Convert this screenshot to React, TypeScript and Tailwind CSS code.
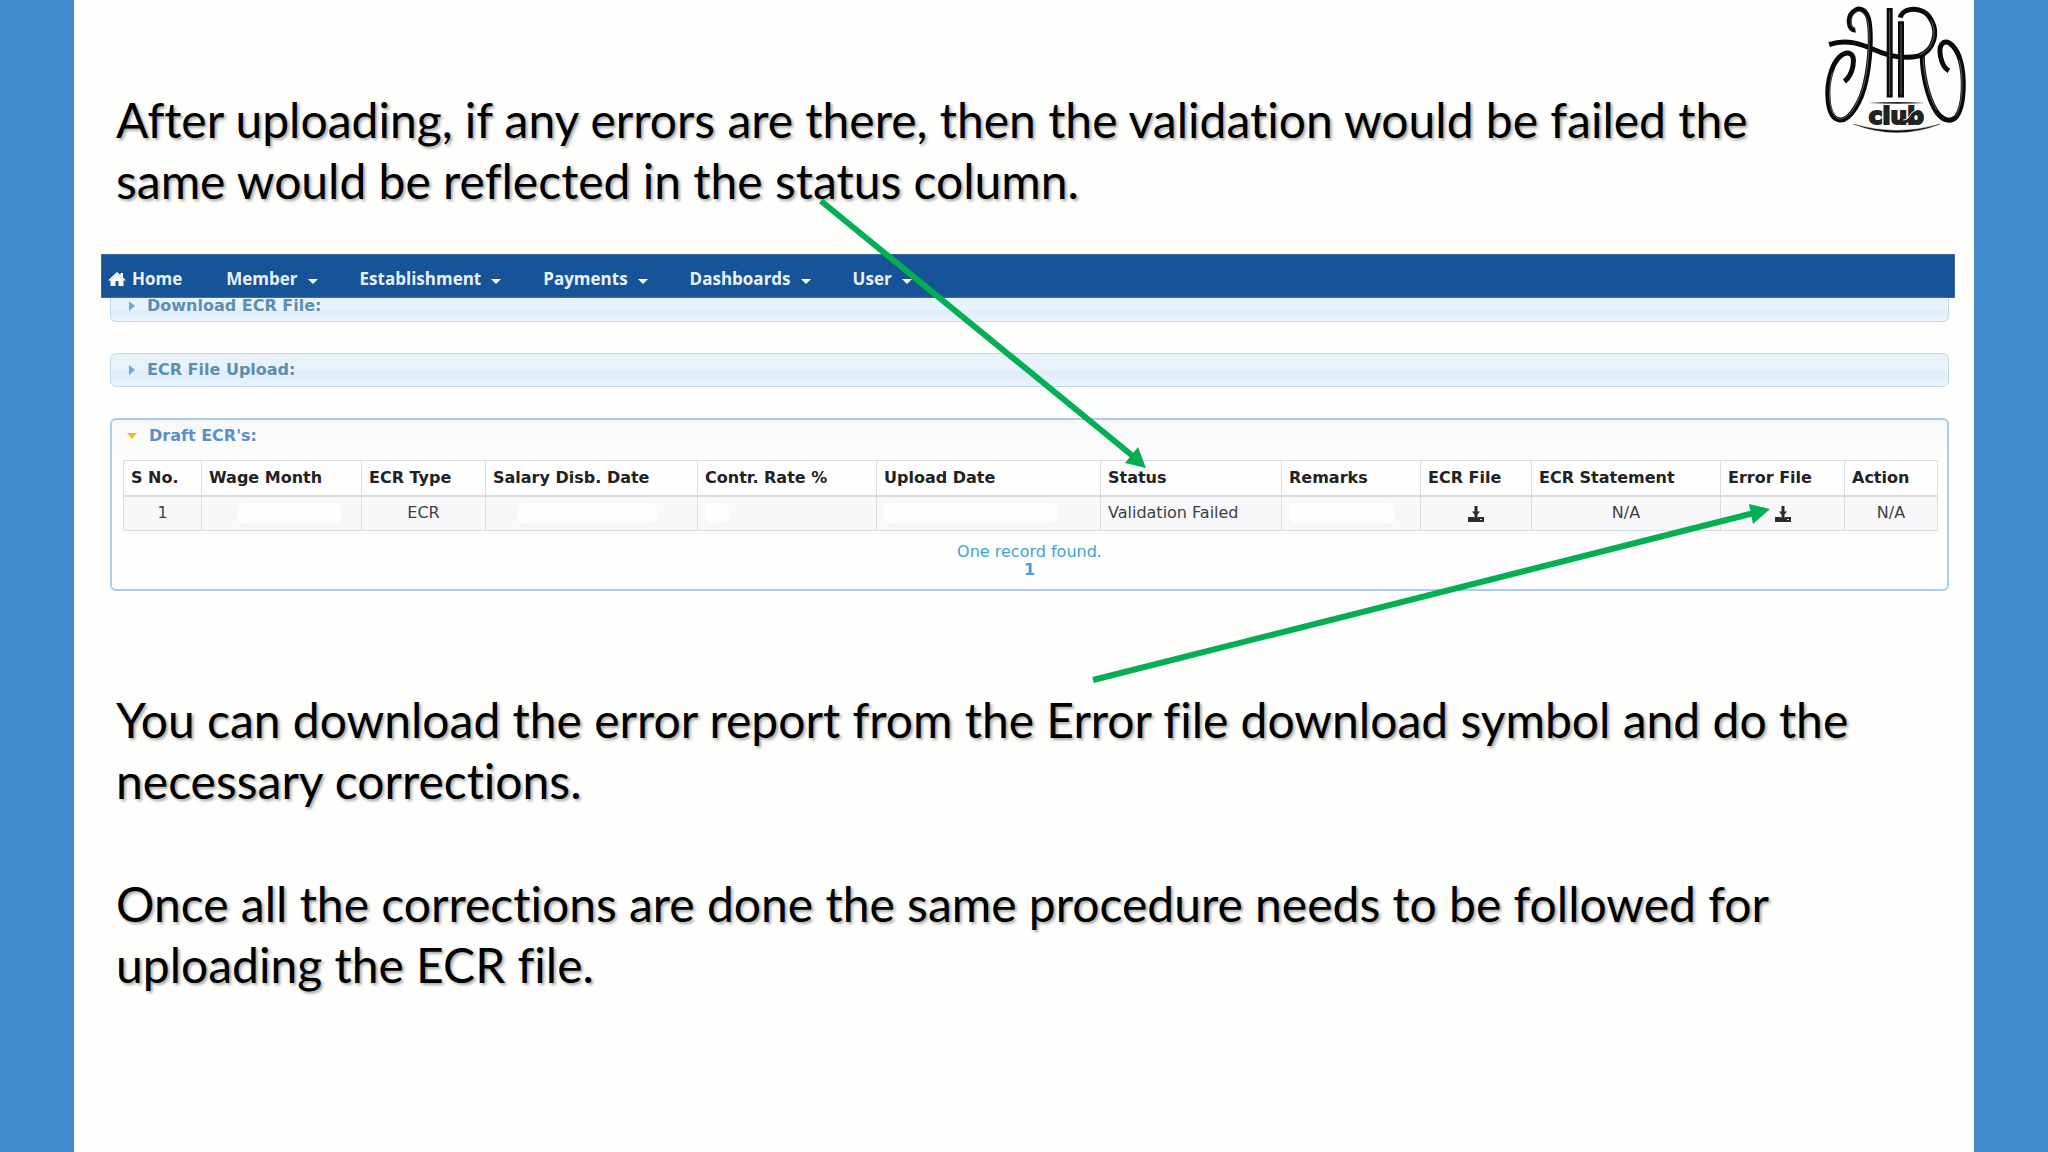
import type { ReactNode } from "react";

const MENU = ["Member", "Establishment", "Payments", "Dashboards", "User"];

interface Column {
  label: string;
  width: string;
  center?: boolean;
  value: ReactNode;
}

function HomeIcon() {
  return (
    <svg viewBox="0 0 18 16" className="h-4 w-[18px]" fill="#fff" aria-hidden="true">
      <path d="M9 1L0 9.500h2.500V15h5v-5h3v5h5V9.500H18L15 6.600V2h-2.500v2.300z" />
      <path d="M3 8.800L9 3.500l6 5.300" fill="none" stroke="#b9cde4" strokeWidth="0.800" />
    </svg>
  );
}

function DownloadIcon() {
  return (
    <svg viewBox="0 0 16 16" className="h-4 w-4" fill="#2b2b2b" aria-hidden="true">
      <path d="M6.500 0h3v5.500H12L8 10.500 4 5.500h2.500z" />
      <path d="M0 11h5.500l2.500 1.500L10.500 11H16v5H0z" />
      <rect x="6.500" y="9" width="3" height="4" />
      <rect x="12" y="13" width="2" height="1" fill="#ddd" />
    </svg>
  );
}

function Download({ label }: { label: string }) {
  return (
    <a href="#" aria-label={label} className="inline-block align-middle">
      <DownloadIcon />
    </a>
  );
}

/** White smudge over a value that is kept private */
function Redacted({ className }: { className: string }) {
  return <span className={`block h-5 rounded-md bg-[#fefefe] ${className}`} />;
}

const COLUMNS: Column[] = [
  { label: "S No.", width: "w-[78px]", center: true, value: "1" },
  { label: "Wage Month", width: "w-[160px]", value: <Redacted className="ml-7 w-[104px]" /> },
  { label: "ECR Type", width: "w-[124px]", center: true, value: "ECR" },
  { label: "Salary Disb. Date", width: "w-[212px]", value: <Redacted className="ml-6 w-[140px]" /> },
  { label: "Contr. Rate %", width: "w-[179px]", value: <Redacted className="w-6" /> },
  { label: "Upload Date", width: "w-[224px]", value: <Redacted className="w-[174px]" /> },
  { label: "Status", width: "w-[181px]", value: "Validation Failed" },
  { label: "Remarks", width: "w-[139px]", value: <Redacted className="w-[106px]" /> },
  { label: "ECR File", width: "w-[111px]", center: true, value: <Download label="Download ECR file" /> },
  { label: "ECR Statement", width: "w-[189px]", center: true, value: "N/A" },
  { label: "Error File", width: "w-[124px]", center: true, value: <Download label="Download error file" /> },
  { label: "Action", width: "w-[93px]", center: true, value: "N/A" },
];

function Logo() {
  return (
    <svg viewBox="56 -2 465 412" className="h-[137px] w-[155px]" fill="none" role="img" aria-label="HR club">
      <g stroke="#0a0a0a" strokeWidth="15" strokeLinecap="butt" strokeLinejoin="round">
        <path d="M165 88C144 92 140 50 158 34C178 14 200 30 206 62C214 110 208 190 196 242C184 300 150 362 118 359C76 354 76 262 92 214C104 174 128 154 146 158C170 166 158 222 132 243" />
        <path d="M86 132C140 114 186 132 218 146C262 166 314 176 356 166C402 150 414 96 394 60C378 24 338 22 318 30C306 36 302 40 300 51" />
        <path d="M268 22V291M302 62V291" strokeWidth="18" />
        <path d="M366 166C366 220 382 290 406 330C424 360 450 368 468 350C494 318 494 226 480 178C470 144 448 118 430 126C410 138 420 196 446 211" />
      </g>
      <g stroke="#8a8a8a" strokeWidth="2">
        <path d="M159 82C148 78 150 50 162 38C180 24 196 38 203 68C210 110 205 190 193 242C180 298 150 354 118 356C82 350 82 262 96 216" />
        <path d="M268 30V284M302 70V284M392 60C412 96 398 148 358 162M369 172C370 220 386 290 409 328M477 178C490 226 489 316 466 346" />
      </g>
      <path d="M203 308Q290 302 375 308Q290 312 203 308Z" fill="#222" />
      <path d="M158 371Q290 422 420 371Q290 410 158 371Z" fill="#111" stroke="#111" strokeWidth="1" />
      <text
        x="288"
        y="370"
        textAnchor="middle"
        fill="#222"
        stroke="#222"
        strokeWidth="6"
        className="font-['DejaVu_Sans'] text-[70px] font-bold"
      >
        club
      </text>
      <path d="M306 366C334 366 330 339 352 337" stroke="#222" strokeWidth="9" />
      <path d="M309 359C330 357 328 332 348 330" stroke="#fff" strokeWidth="3" />
    </svg>
  );
}

function Arrows() {
  return (
    <svg
      viewBox="0 0 1900 1152"
      preserveAspectRatio="none"
      className="pointer-events-none absolute top-0 left-0 h-[1152px] w-full"
      aria-hidden="true"
    >
      <g stroke="#04ae52" strokeWidth="6">
        <path d="M747 201L1060 457" />
        <path d="M1019 680L1680 513" />
      </g>
      <g fill="#04ae52">
        <path d="M1072 468L1051 463L1064 447Z" />
        <path d="M1696 509L1675 504L1679 524Z" />
      </g>
    </svg>
  );
}

function Slab({ title, className }: { title: string; className?: string }) {
  return (
    <button
      type="button"
      className={`flex w-full items-center border border-[#bfdaea] bg-linear-to-b from-[#e9f2fb] from-50% via-[#dfedf9] via-55% to-[#eaf4ff] px-4 text-left text-base font-bold text-[#5a8fb0] ${className}`}
    >
      <span className="mr-3 ml-0.5 border-y-[5px] border-l-[6px] border-y-transparent border-l-[#6ea8cc]" />
      {title}
    </button>
  );
}

function Portal() {
  return (
    <section className="mr-[19px] ml-[27px] font-['DejaVu_Sans',sans-serif]">
      <nav className="flex h-11 items-center border border-[#3f6ea5] bg-[#165397] pt-1.5 pl-1.5 font-['Open_Sans',sans-serif] text-[17px] font-bold text-[#e8f2ff]">
        <a href="#" className="mr-11 flex items-center gap-1.5">
          <HomeIcon />
          Home
        </a>
        {MENU.map((item) => (
          <button key={item} type="button" className="mr-[42px] flex items-center gap-2.5">
            {item}
            <span className="mt-1 border-x-[5px] border-t-[5px] border-x-transparent border-t-white" />
          </button>
        ))}
      </nav>

      <div className="mr-1.5 ml-[9px]">
        <Slab title="Download ECR File:" className="h-6 rounded-b-md border-t-0 pb-2" />
        <Slab title="ECR File Upload:" className="mt-[31px] h-[34px] rounded-md" />

        <div className="mt-[31px] h-[173px] rounded-md border-2 border-[#a9cdea] bg-linear-to-b from-[#f5f7f8] to-[#fdfdfe] to-20% px-[11px]">
          <button type="button" className="flex h-8 items-center text-base font-bold text-[#5b8fcb]">
            <span className="mr-3 ml-1 border-x-[5px] border-t-[6px] border-x-transparent border-t-[#f2b51d]" />
            Draft ECR's:
          </button>

          <table className="mt-2 w-full table-fixed border-collapse text-base text-[#3f3f3f]">
            <thead>
              <tr className="h-[35px]">
                {COLUMNS.map((c) => (
                  <th
                    key={c.label}
                    className={`border border-b-2 border-[#dcdcdc] pl-[7px] text-left font-bold whitespace-nowrap text-[#222] ${c.width}`}
                  >
                    {c.label}
                  </th>
                ))}
              </tr>
            </thead>
            <tbody>
              <tr className="h-[35px] bg-[#f8f8fa]">
                {COLUMNS.map((c) => (
                  <td
                    key={c.label}
                    className={`border border-[#dcdcdc] whitespace-nowrap ${c.center ? "text-center" : "pl-[7px]"}`}
                  >
                    {c.value}
                  </td>
                ))}
              </tr>
            </tbody>
          </table>

          <div className="mt-3 text-center text-base leading-[18px] text-[#3fa3d3]">
            <p>One record found.</p>
            <p className="font-bold">1</p>
          </div>
        </div>
      </div>
    </section>
  );
}

function Note({ children, className }: { children: ReactNode; className: string }) {
  return (
    <p
      className={`ml-[42px] font-['Lato',sans-serif] text-[48px] leading-[61px] whitespace-nowrap text-black [font-variant-ligatures:none] [text-shadow:2px_2px_3px_rgba(0,0,0,0.35)] ${className}`}
    >
      {children}
    </p>
  );
}

export default function App() {
  return (
    <div className="flex min-h-screen bg-[#3f89cd]">
      <main className="relative mr-[74px] ml-[74px] min-w-0 flex-1 bg-[#fefefd]">
        <div className="absolute top-0 right-0">
          <Logo />
        </div>
        <Note className="pt-[89px] pb-[43px]">
          After uploading, if any errors are there, then the validation would be failed the
          <br />
          same would be reflected in the status column.
        </Note>
        <Portal />
        <Note className="mt-[98px]">
          You can download the error report from the Error file download symbol and do the
          <br />
          necessary corrections.
        </Note>
        <Note className="mt-[62px]">
          Once all the corrections are done the same procedure needs to be followed for
          <br />
          uploading the ECR file.
        </Note>
        <Arrows />
      </main>
    </div>
  );
}
